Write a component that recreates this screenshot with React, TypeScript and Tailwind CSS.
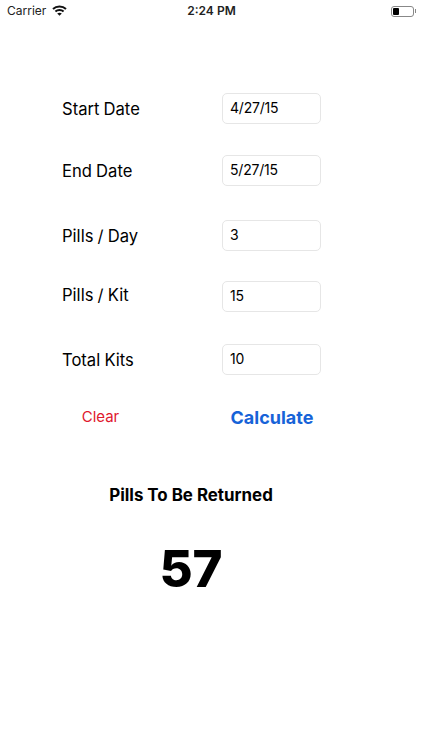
import { useState } from "react";

function Row({ label, value, className, labelClass = "" }: { label: string; value: string; className: string; labelClass?: string }) {
  return (
    <div className={`flex items-center justify-between w-[259px] ${className}`}>
      <span className={`text-[16.6px] leading-[22px] text-black [word-spacing:-0.5px] ${labelClass}`}>{label}</span>
      <div className="w-[99px] h-[31px] border border-[#e6e6e6] rounded-[5px] pl-[7px] text-[14px] tracking-[-0.2px] leading-[27px] text-black">
        {value}
      </div>
    </div>
  );
}

export default function App() {
  const [rows] = useState([
    { label: "Start Date", value: "4/27/15", className: "mt-[71px]" },
    { label: "End Date", value: "5/27/15", className: "mt-[31px]" },
    { label: "Pills / Day", value: "3", className: "mt-[34px]" },
    { label: "Pills / Kit", value: "15", className: "mt-[30px]", labelClass: "mb-[3px]" },
    { label: "Total Kits", value: "10", className: "mt-[32px]" },
  ]);

  return (
    <div className="w-[422px] h-[750px] bg-white overflow-hidden font-['Inter',sans-serif]">
      {/* Status bar */}
      <div className="h-[22px] flex items-center justify-between pl-[7px] pr-[6px] text-[12px] text-[#222]">
        <div className="flex items-center gap-[6px] w-[140px]">
          <span>Carrier</span>
          <svg width="15" height="11" viewBox="0 0 15 11" fill="none" stroke="#111" strokeWidth="2" className="-ml-[0.5px] -mt-[1px]">
            <path d="M1 4 C4.5 0.7 10.5 0.7 14 4" />
            <path d="M3.4 6.5 C5.6 4.6 9.4 4.6 11.6 6.5" />
            <path d="M7.5 10.8 L5.2 8.5 C6.5 7.5 8.5 7.5 9.8 8.5 Z" fill="#111" stroke="none" />
          </svg>
        </div>
        <span className="font-semibold">2:24 PM</span>
        <div className="w-[140px] flex justify-end items-center">
          <div className="w-[23px] h-[11px] border border-[#888] rounded-[3px] p-[1px]">
            <div className="w-[6px] h-full bg-black rounded-[1px]" />
          </div>
          <div className="w-[1px] h-[4px] bg-[#888] ml-[1px]" />
        </div>
      </div>

      <div className="pl-[62px]">
        {rows.map((r) => (
          <Row key={r.label} {...r} />
        ))}
      </div>

      <div className="flex mt-[29px] h-[26px] items-center">
        <span className="w-[201px] text-center text-[#e0182d] text-[15px]">Clear</span>
        <span className="w-[142px] text-center text-[#1763d8] text-[18px] font-bold">Calculate</span>
      </div>

      <div className="w-[382px] text-center font-bold text-[16.9px] text-black mt-[53px] leading-[24px]">
        Pills To Be Returned
      </div>
      <div className="w-[382px] text-center font-extrabold text-[51px] text-black mt-[32px] leading-[60px]">
        57
      </div>
    </div>
  );
}
